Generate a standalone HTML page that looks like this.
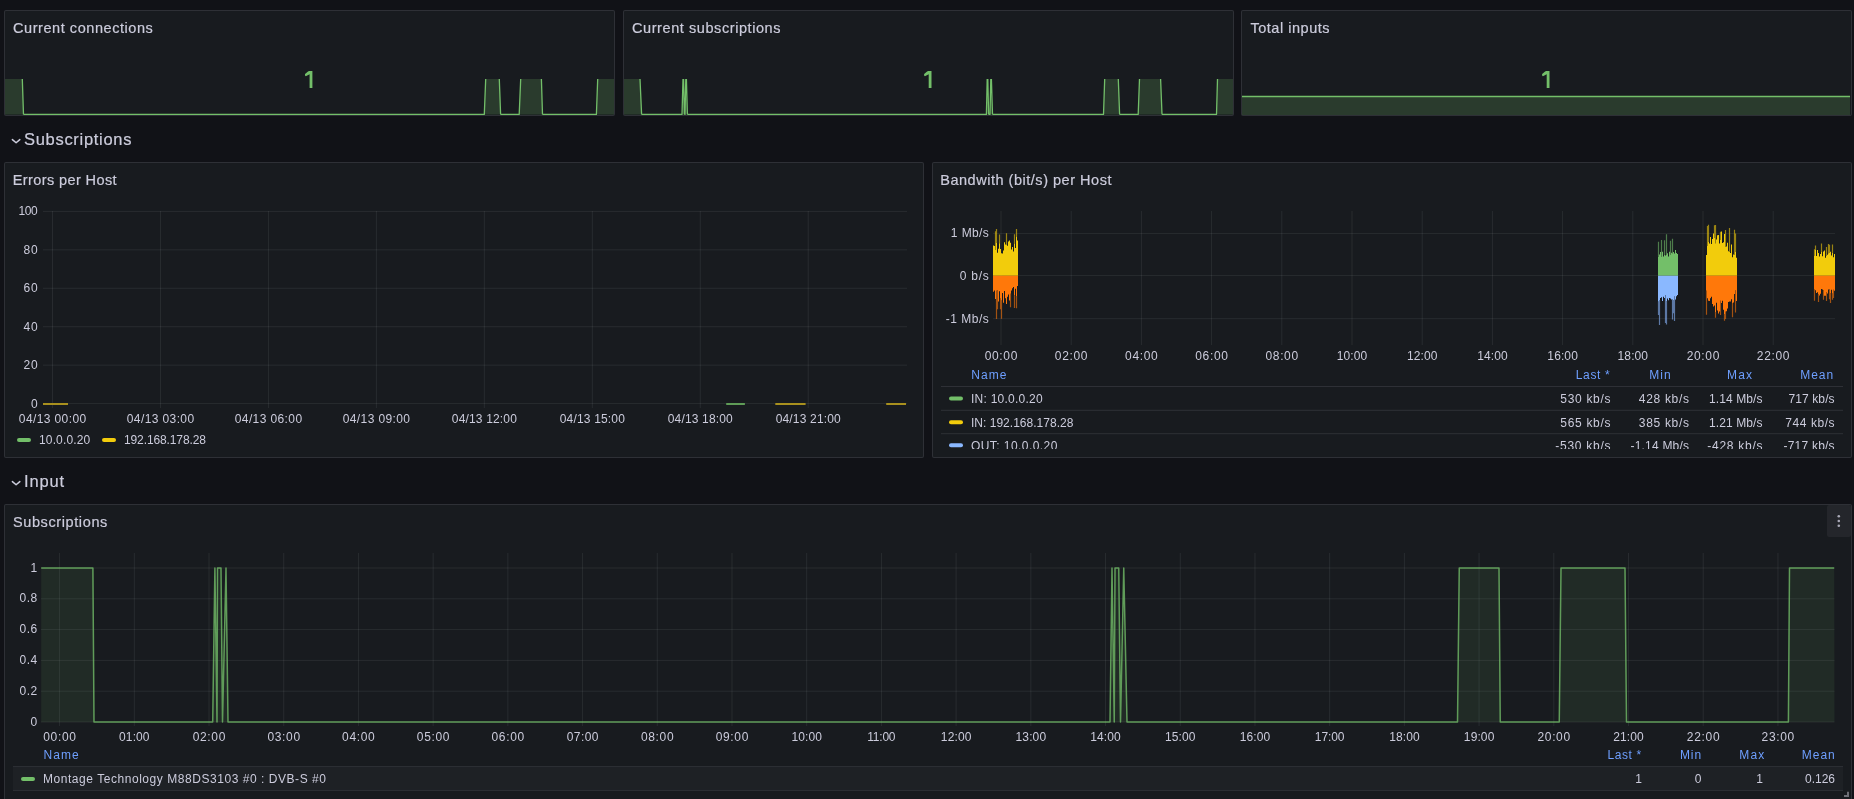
<!DOCTYPE html>
<html><head><meta charset="utf-8"><style>
html,body{margin:0;padding:0;background:#111217;}
body{width:1854px;height:799px;overflow:hidden;position:relative;font-family:"Liberation Sans",sans-serif;}
.p{position:absolute;box-sizing:border-box;background:#181b1f;border:1px solid rgba(204,204,220,0.12);border-radius:2px;}
svg{position:absolute;left:0;top:0;will-change:transform;}
svg text{font-family:"Liberation Sans",sans-serif;}
</style></head><body>
<div class="p" style="left:4px;top:10px;width:611px;height:106px"></div><div class="p" style="left:623px;top:10px;width:611px;height:106px"></div><div class="p" style="left:1241px;top:10px;width:611px;height:106px"></div><div class="p" style="left:4px;top:162px;width:920px;height:296px"></div><div class="p" style="left:932px;top:162px;width:920px;height:296px"></div><div class="p" style="left:4px;top:504px;width:1848px;height:320px"></div>
<svg width="1854" height="799" viewBox="0 0 1854 799">
<defs><clipPath id="bwclip"><rect x="933" y="380" width="917" height="69"/></clipPath></defs>
<path d="M5,114.4L5,79L22.3,79L23.5,114.4ZM484.3,114.4L485.7,79L499.3,79L500.6,114.4ZM519.2,114.4L520.7,79L541.4,79L542.5,114.4ZM596.4,114.4L597.7,79L614,79L614,114.4Z" fill="rgba(115,191,105,0.2)"/>
<path d="M22.3,79L23.5,114.4M23.5,114.4L484.3,114.4L485.7,79M499.3,79L500.6,114.4M500.6,114.4L519.2,114.4L520.7,79M541.4,79L542.5,114.4M542.5,114.4L596.4,114.4L597.7,79" fill="none" stroke="#73bf69" stroke-width="1.3" stroke-linejoin="round"/>
<path d="M624,114.4L624,79L640,79L641.6,114.4ZM682,114.4L683,79L683.6,79L684.4,114.4ZM685,114.4L685.8,79L686.4,79L687.4,114.4ZM986.4,114.4L987.2,79L987.8,79L988.6,114.4ZM990,114.4L990.8,79L991.4,79L992.5,114.4ZM1103.5,114.4L1104.7,79L1118.3,79L1119.6,114.4ZM1138.2,114.4L1139.5,79L1160.6,79L1162,114.4ZM1216.5,114.4L1217.5,79L1233,79L1233,114.4Z" fill="rgba(115,191,105,0.2)"/>
<path d="M640,79L641.6,114.4M641.6,114.4L682,114.4L683,79M683.6,79L684.4,114.4M684.4,114.4L685,114.4L685.8,79M686.4,79L687.4,114.4M687.4,114.4L986.4,114.4L987.2,79M987.8,79L988.6,114.4M988.6,114.4L990,114.4L990.8,79M991.4,79L992.5,114.4M992.5,114.4L1103.5,114.4L1104.7,79M1118.3,79L1119.6,114.4M1119.6,114.4L1138.2,114.4L1139.5,79M1160.6,79L1162,114.4M1162,114.4L1216.5,114.4L1217.5,79" fill="none" stroke="#73bf69" stroke-width="1.3" stroke-linejoin="round"/>
<rect x="1242" y="96.6" width="608" height="18.4" fill="rgba(115,191,105,0.2)"/>
<path d="M1242,96.6L1850,96.6" stroke="#73bf69" stroke-width="1.5"/>
<text x="13" y="33" font-size="14.5" text-anchor="start" fill="#ccccdc" textLength="139.8" lengthAdjust="spacing" font-weight="400" stroke="#ccccdc" stroke-width="0.2" >Current connections</text>
<text x="632" y="33" font-size="14.5" text-anchor="start" fill="#ccccdc" textLength="148.5" lengthAdjust="spacing" font-weight="400" stroke="#ccccdc" stroke-width="0.2" >Current subscriptions</text>
<text x="1250.5" y="33" font-size="14.5" text-anchor="start" fill="#ccccdc" textLength="79" lengthAdjust="spacing" font-weight="400" stroke="#ccccdc" stroke-width="0.2" >Total inputs</text>
<path d="M309.0,70.9L312.4,70.9L312.4,87.9L309.6,87.9L309.6,74.2L305.8,76.2L305.0,75.5L305.0,74.0L308.0,71.6Z" fill="#73bf69"/>
<path d="M928.1,70.9L931.5,70.9L931.5,87.9L928.7,87.9L928.7,74.2L924.9,76.2L924.1,75.5L924.1,74.0L927.1,71.6Z" fill="#73bf69"/>
<path d="M1546.1,70.9L1549.5,70.9L1549.5,87.9L1546.7,87.9L1546.7,74.2L1542.9,76.2L1542.1,75.5L1542.1,74.0L1545.1,71.6Z" fill="#73bf69"/>
<path d="M12.4,139.6L16.1,142.79999999999998L19.8,139.6" fill="none" stroke="#ccccdc" stroke-width="1.5" stroke-linecap="round" stroke-linejoin="round"/>
<text x="24" y="145" font-size="16.5" text-anchor="start" fill="#ccccdc" textLength="107.5" lengthAdjust="spacing" font-weight="400" stroke="#ccccdc" stroke-width="0.2" >Subscriptions</text>
<path d="M12.4,481.6L16.1,484.8L19.8,481.6" fill="none" stroke="#ccccdc" stroke-width="1.5" stroke-linecap="round" stroke-linejoin="round"/>
<text x="24" y="487.2" font-size="16.5" text-anchor="start" fill="#ccccdc" textLength="40.0" lengthAdjust="spacing" font-weight="400" stroke="#ccccdc" stroke-width="0.2" >Input</text>
<text x="12.8" y="185" font-size="14.5" text-anchor="start" fill="#ccccdc" textLength="103.8" lengthAdjust="spacing" font-weight="400" stroke="#ccccdc" stroke-width="0.2" >Errors per Host</text>
<path d="M43,211.40L907,211.40" stroke="rgba(240,250,255,0.075)" stroke-width="1"/>
<text x="37.8" y="215.4" font-size="12" text-anchor="end" fill="#ccccdc" textLength="19.4" lengthAdjust="spacing" font-weight="400"  >100</text>
<path d="M43,249.84L907,249.84" stroke="rgba(240,250,255,0.075)" stroke-width="1"/>
<text x="37.8" y="253.84" font-size="12" text-anchor="end" fill="#ccccdc" textLength="14.4" lengthAdjust="spacing" font-weight="400"  >80</text>
<path d="M43,288.28L907,288.28" stroke="rgba(240,250,255,0.075)" stroke-width="1"/>
<text x="37.8" y="292.28" font-size="12" text-anchor="end" fill="#ccccdc" textLength="14.4" lengthAdjust="spacing" font-weight="400"  >60</text>
<path d="M43,326.72L907,326.72" stroke="rgba(240,250,255,0.075)" stroke-width="1"/>
<text x="37.8" y="330.72" font-size="12" text-anchor="end" fill="#ccccdc" textLength="14.4" lengthAdjust="spacing" font-weight="400"  >40</text>
<path d="M43,365.16L907,365.16" stroke="rgba(240,250,255,0.075)" stroke-width="1"/>
<text x="37.8" y="369.15999999999997" font-size="12" text-anchor="end" fill="#ccccdc" textLength="14.4" lengthAdjust="spacing" font-weight="400"  >20</text>
<path d="M43,403.60L907,403.60" stroke="rgba(240,250,255,0.075)" stroke-width="1"/>
<text x="37.8" y="407.6" font-size="12" text-anchor="end" fill="#ccccdc" textLength="7.2" lengthAdjust="spacing" font-weight="400"  >0</text>
<path d="M52.50,211L52.50,408" stroke="rgba(240,250,255,0.075)" stroke-width="1"/>
<text x="52.5" y="423" font-size="12" text-anchor="middle" fill="#ccccdc" textLength="67.3" lengthAdjust="spacing" font-weight="400"  >04/13 00:00</text>
<path d="M160.46,211L160.46,408" stroke="rgba(240,250,255,0.075)" stroke-width="1"/>
<text x="160.45999999999998" y="423" font-size="12" text-anchor="middle" fill="#ccccdc" textLength="67.3" lengthAdjust="spacing" font-weight="400"  >04/13 03:00</text>
<path d="M268.42,211L268.42,408" stroke="rgba(240,250,255,0.075)" stroke-width="1"/>
<text x="268.41999999999996" y="423" font-size="12" text-anchor="middle" fill="#ccccdc" textLength="67.3" lengthAdjust="spacing" font-weight="400"  >04/13 06:00</text>
<path d="M376.38,211L376.38,408" stroke="rgba(240,250,255,0.075)" stroke-width="1"/>
<text x="376.38" y="423" font-size="12" text-anchor="middle" fill="#ccccdc" textLength="67.3" lengthAdjust="spacing" font-weight="400"  >04/13 09:00</text>
<path d="M484.34,211L484.34,408" stroke="rgba(240,250,255,0.075)" stroke-width="1"/>
<text x="484.34" y="423" font-size="12" text-anchor="middle" fill="#ccccdc" textLength="65.1" lengthAdjust="spacing" font-weight="400"  >04/13 12:00</text>
<path d="M592.30,211L592.30,408" stroke="rgba(240,250,255,0.075)" stroke-width="1"/>
<text x="592.3" y="423" font-size="12" text-anchor="middle" fill="#ccccdc" textLength="65.1" lengthAdjust="spacing" font-weight="400"  >04/13 15:00</text>
<path d="M700.26,211L700.26,408" stroke="rgba(240,250,255,0.075)" stroke-width="1"/>
<text x="700.26" y="423" font-size="12" text-anchor="middle" fill="#ccccdc" textLength="65.1" lengthAdjust="spacing" font-weight="400"  >04/13 18:00</text>
<path d="M808.22,211L808.22,408" stroke="rgba(240,250,255,0.075)" stroke-width="1"/>
<text x="808.2199999999999" y="423" font-size="12" text-anchor="middle" fill="#ccccdc" textLength="65.1" lengthAdjust="spacing" font-weight="400"  >04/13 21:00</text>
<path d="M43,404.0L68,404.0" stroke="#a8901e" stroke-width="2"/>
<path d="M726.2,404.0L744.9,404.0" stroke="#5f9c57" stroke-width="2"/>
<path d="M775.3,404.0L805.6,404.0" stroke="#a8901e" stroke-width="2"/>
<path d="M886.2,404.0L906,404.0" stroke="#a8901e" stroke-width="2"/>
<rect x="17" y="438.0" width="14" height="4" rx="2" fill="#73bf69"/>
<text x="39" y="444" font-size="12" text-anchor="start" fill="#ccccdc" textLength="51.2" lengthAdjust="spacing" font-weight="400"  >10.0.0.20</text>
<rect x="102" y="438.0" width="14" height="4" rx="2" fill="#f2cc0c"/>
<text x="124" y="444" font-size="12" text-anchor="start" fill="#ccccdc" textLength="81.9" lengthAdjust="spacing" font-weight="400"  >192.168.178.28</text>
<text x="940.2" y="185" font-size="14.5" text-anchor="start" fill="#ccccdc" textLength="171.3" lengthAdjust="spacing" font-weight="400" stroke="#ccccdc" stroke-width="0.2" >Bandwith (bit/s) per Host</text>
<path d="M993,233.60L1835,233.60" stroke="rgba(240,250,255,0.075)" stroke-width="1"/>
<text x="988.8" y="237.1" font-size="12" text-anchor="end" fill="#ccccdc" textLength="37.96" lengthAdjust="spacing" font-weight="400"  >1 Mb/s</text>
<path d="M993,275.60L1835,275.60" stroke="rgba(240,250,255,0.075)" stroke-width="1"/>
<text x="988.8" y="280.0" font-size="12" text-anchor="end" fill="#ccccdc" textLength="29.16" lengthAdjust="spacing" font-weight="400"  >0 b/s</text>
<path d="M993,318.70L1835,318.70" stroke="rgba(240,250,255,0.075)" stroke-width="1"/>
<text x="988.8" y="323.09999999999997" font-size="12" text-anchor="end" fill="#ccccdc" textLength="42.96" lengthAdjust="spacing" font-weight="400"  >-1 Mb/s</text>
<path d="M1001.00,211L1001.00,345" stroke="rgba(240,250,255,0.075)" stroke-width="1"/>
<text x="1001.0" y="360" font-size="12" text-anchor="middle" fill="#ccccdc" textLength="32.7" lengthAdjust="spacing" font-weight="400"  >00:00</text>
<path d="M1071.20,211L1071.20,345" stroke="rgba(240,250,255,0.075)" stroke-width="1"/>
<text x="1071.2" y="360" font-size="12" text-anchor="middle" fill="#ccccdc" textLength="32.7" lengthAdjust="spacing" font-weight="400"  >02:00</text>
<path d="M1141.40,211L1141.40,345" stroke="rgba(240,250,255,0.075)" stroke-width="1"/>
<text x="1141.4" y="360" font-size="12" text-anchor="middle" fill="#ccccdc" textLength="32.7" lengthAdjust="spacing" font-weight="400"  >04:00</text>
<path d="M1211.60,211L1211.60,345" stroke="rgba(240,250,255,0.075)" stroke-width="1"/>
<text x="1211.6" y="360" font-size="12" text-anchor="middle" fill="#ccccdc" textLength="32.7" lengthAdjust="spacing" font-weight="400"  >06:00</text>
<path d="M1281.80,211L1281.80,345" stroke="rgba(240,250,255,0.075)" stroke-width="1"/>
<text x="1281.8" y="360" font-size="12" text-anchor="middle" fill="#ccccdc" textLength="32.7" lengthAdjust="spacing" font-weight="400"  >08:00</text>
<path d="M1352.00,211L1352.00,345" stroke="rgba(240,250,255,0.075)" stroke-width="1"/>
<text x="1352.0" y="360" font-size="12" text-anchor="middle" fill="#ccccdc" textLength="30.5" lengthAdjust="spacing" font-weight="400"  >10:00</text>
<path d="M1422.20,211L1422.20,345" stroke="rgba(240,250,255,0.075)" stroke-width="1"/>
<text x="1422.2" y="360" font-size="12" text-anchor="middle" fill="#ccccdc" textLength="30.5" lengthAdjust="spacing" font-weight="400"  >12:00</text>
<path d="M1492.40,211L1492.40,345" stroke="rgba(240,250,255,0.075)" stroke-width="1"/>
<text x="1492.4" y="360" font-size="12" text-anchor="middle" fill="#ccccdc" textLength="30.5" lengthAdjust="spacing" font-weight="400"  >14:00</text>
<path d="M1562.60,211L1562.60,345" stroke="rgba(240,250,255,0.075)" stroke-width="1"/>
<text x="1562.6" y="360" font-size="12" text-anchor="middle" fill="#ccccdc" textLength="30.5" lengthAdjust="spacing" font-weight="400"  >16:00</text>
<path d="M1632.80,211L1632.80,345" stroke="rgba(240,250,255,0.075)" stroke-width="1"/>
<text x="1632.8000000000002" y="360" font-size="12" text-anchor="middle" fill="#ccccdc" textLength="30.5" lengthAdjust="spacing" font-weight="400"  >18:00</text>
<path d="M1703.00,211L1703.00,345" stroke="rgba(240,250,255,0.075)" stroke-width="1"/>
<text x="1703.0" y="360" font-size="12" text-anchor="middle" fill="#ccccdc" textLength="32.7" lengthAdjust="spacing" font-weight="400"  >20:00</text>
<path d="M1773.20,211L1773.20,345" stroke="rgba(240,250,255,0.075)" stroke-width="1"/>
<text x="1773.2" y="360" font-size="12" text-anchor="middle" fill="#ccccdc" textLength="32.7" lengthAdjust="spacing" font-weight="400"  >22:00</text>
<path d="M993,275.8L993,245.5L994,245.5L994,275.8ZM994,275.8L994,245.9L995,245.9L995,275.8ZM995,275.8L995,249.9L996,249.9L996,275.8ZM996,275.8L996,243.0L997,243.0L997,275.8ZM997,275.8L997,252.7L998,252.7L998,275.8ZM998,275.8L998,248.8L999,248.8L999,275.8ZM999,275.8L999,243.3L1000,243.3L1000,275.8ZM1000,275.8L1000,248.9L1001,248.9L1001,275.8ZM1001,275.8L1001,253.3L1002,253.3L1002,275.8ZM1002,275.8L1002,253.4L1003,253.4L1003,275.8ZM1003,275.8L1003,250.6L1004,250.6L1004,275.8ZM1004,275.8L1004,242.3L1005,242.3L1005,275.8ZM1005,275.8L1005,244.5L1006,244.5L1006,275.8ZM1006,275.8L1006,244.5L1007,244.5L1007,275.8ZM1007,275.8L1007,245.8L1008,245.8L1008,275.8ZM1008,275.8L1008,241.4L1009,241.4L1009,275.8ZM1009,275.8L1009,240.5L1010,240.5L1010,275.8ZM1010,275.8L1010,242.7L1011,242.7L1011,275.8ZM1011,275.8L1011,249.4L1012,249.4L1012,275.8ZM1012,275.8L1012,247.0L1013,247.0L1013,275.8ZM1013,275.8L1013,251.4L1014,251.4L1014,275.8ZM1014,275.8L1014,243.6L1015,243.6L1015,275.8ZM1015,275.8L1015,248.0L1016,248.0L1016,275.8ZM1016,275.8L1016,236.4L1017,236.4L1017,275.8ZM1017,275.8L1017,240.4L1018,240.4L1018,275.8Z" fill="#f2cc0c"/>
<path d="M993,275.8L993,291.7L994,291.7L994,275.8ZM994,275.8L994,290.4L995,290.4L995,275.8ZM995,275.8L995,299.0L996,299.0L996,275.8ZM996,275.8L996,290.8L997,290.8L997,275.8ZM997,275.8L997,289.9L998,289.9L998,275.8ZM998,275.8L998,301.5L999,301.5L999,275.8ZM999,275.8L999,291.2L1000,291.2L1000,275.8ZM1000,275.8L1000,298.6L1001,298.6L1001,275.8ZM1001,275.8L1001,300.5L1002,300.5L1002,275.8ZM1002,275.8L1002,292.9L1003,292.9L1003,275.8ZM1003,275.8L1003,302.7L1004,302.7L1004,275.8ZM1004,275.8L1004,290.9L1005,290.9L1005,275.8ZM1005,275.8L1005,298.2L1006,298.2L1006,275.8ZM1006,275.8L1006,304.1L1007,304.1L1007,275.8ZM1007,275.8L1007,296.7L1008,296.7L1008,275.8ZM1008,275.8L1008,294.5L1009,294.5L1009,275.8ZM1009,275.8L1009,300.6L1010,300.6L1010,275.8ZM1010,275.8L1010,293.7L1011,293.7L1011,275.8ZM1011,275.8L1011,290.6L1012,290.6L1012,275.8ZM1012,275.8L1012,288.3L1013,288.3L1013,275.8ZM1013,275.8L1013,286.9L1014,286.9L1014,275.8ZM1014,275.8L1014,295.2L1015,295.2L1015,275.8ZM1015,275.8L1015,288.8L1016,288.8L1016,275.8ZM1016,275.8L1016,296.1L1017,296.1L1017,275.8ZM1017,275.8L1017,286.0L1018,286.0L1018,275.8Z" fill="#ff780a"/>
<path d="M995.5,249.9L995.5,231.3M996.5,243.0L996.5,228.9M999.5,243.3L999.5,234.6M1006.5,244.5L1006.5,233.3M1014.5,243.6L1014.5,234.3M1016.5,236.4L1016.5,229.0" stroke="#f2cc0c" stroke-width="1.2" opacity="0.6"/>
<path d="M996.5,290.8L996.5,319.0M997.5,289.9L997.5,309.2M1000.5,298.6L1000.5,309.2M1001.5,300.5L1001.5,318.7M1010.5,293.7L1010.5,307.2M1014.5,295.2L1014.5,307.9M1016.5,296.1L1016.5,308.3" stroke="#ff780a" stroke-width="1.2" opacity="0.6"/>
<path d="M1658,275.8L1658,256.7L1659,256.7L1659,275.8ZM1659,275.8L1659,254.4L1660,254.4L1660,275.8ZM1660,275.8L1660,251.9L1661,251.9L1661,275.8ZM1661,275.8L1661,256.4L1662,256.4L1662,275.8ZM1662,275.8L1662,251.8L1663,251.8L1663,275.8ZM1663,275.8L1663,256.5L1664,256.5L1664,275.8ZM1664,275.8L1664,254.7L1665,254.7L1665,275.8ZM1665,275.8L1665,255.4L1666,255.4L1666,275.8ZM1666,275.8L1666,254.5L1667,254.5L1667,275.8ZM1667,275.8L1667,253.3L1668,253.3L1668,275.8ZM1668,275.8L1668,256.4L1669,256.4L1669,275.8ZM1669,275.8L1669,251.7L1670,251.7L1670,275.8ZM1670,275.8L1670,254.5L1671,254.5L1671,275.8ZM1671,275.8L1671,252.7L1672,252.7L1672,275.8ZM1672,275.8L1672,253.3L1673,253.3L1673,275.8ZM1673,275.8L1673,252.1L1674,252.1L1674,275.8ZM1674,275.8L1674,253.5L1675,253.5L1675,275.8ZM1675,275.8L1675,249.9L1676,249.9L1676,275.8ZM1676,275.8L1676,253.0L1677,253.0L1677,275.8ZM1677,275.8L1677,253.9L1678,253.9L1678,275.8Z" fill="#73bf69"/>
<path d="M1658,275.8L1658,301.4L1659,301.4L1659,275.8ZM1659,275.8L1659,299.9L1660,299.9L1660,275.8ZM1660,275.8L1660,298.0L1661,298.0L1661,275.8ZM1661,275.8L1661,297.2L1662,297.2L1662,275.8ZM1662,275.8L1662,301.1L1663,301.1L1663,275.8ZM1663,275.8L1663,296.7L1664,296.7L1664,275.8ZM1664,275.8L1664,297.9L1665,297.9L1665,275.8ZM1665,275.8L1665,295.3L1666,295.3L1666,275.8ZM1666,275.8L1666,301.1L1667,301.1L1667,275.8ZM1667,275.8L1667,298.6L1668,298.6L1668,275.8ZM1668,275.8L1668,300.2L1669,300.2L1669,275.8ZM1669,275.8L1669,298.0L1670,298.0L1670,275.8ZM1670,275.8L1670,298.5L1671,298.5L1671,275.8ZM1671,275.8L1671,299.5L1672,299.5L1672,275.8ZM1672,275.8L1672,299.5L1673,299.5L1673,275.8ZM1673,275.8L1673,300.0L1674,300.0L1674,275.8ZM1674,275.8L1674,296.5L1675,296.5L1675,275.8ZM1675,275.8L1675,299.4L1676,299.4L1676,275.8ZM1676,275.8L1676,296.2L1677,296.2L1677,275.8ZM1677,275.8L1677,295.1L1678,295.1L1678,275.8Z" fill="#8ab8ff"/>
<path d="M1658.5,256.7L1658.5,241.8M1661.5,256.4L1661.5,240.0M1664.5,254.7L1664.5,240.3M1666.5,254.5L1666.5,234.3M1670.5,254.5L1670.5,240.7M1672.5,253.3L1672.5,238.8" stroke="#73bf69" stroke-width="1.2" opacity="0.6"/>
<path d="M1658.5,301.4L1658.5,314.9M1659.5,299.9L1659.5,325.0M1665.5,295.3L1665.5,322.9M1666.5,301.1L1666.5,324.6M1672.5,299.5L1672.5,319.6M1673.5,300.0L1673.5,313.2M1674.5,296.5L1674.5,321.1" stroke="#8ab8ff" stroke-width="1.2" opacity="0.6"/>
<path d="M1706,275.8L1706,254.9L1707,254.9L1707,275.8ZM1707,275.8L1707,246.1L1708,246.1L1708,275.8ZM1708,275.8L1708,241.8L1709,241.8L1709,275.8ZM1709,275.8L1709,243.6L1710,243.6L1710,275.8ZM1710,275.8L1710,236.9L1711,236.9L1711,275.8ZM1711,275.8L1711,244.1L1712,244.1L1712,275.8ZM1712,275.8L1712,239.0L1713,239.0L1713,275.8ZM1713,275.8L1713,233.5L1714,233.5L1714,275.8ZM1714,275.8L1714,237.7L1715,237.7L1715,275.8ZM1715,275.8L1715,243.2L1716,243.2L1716,275.8ZM1716,275.8L1716,239.6L1717,239.6L1717,275.8ZM1717,275.8L1717,235.3L1718,235.3L1718,275.8ZM1718,275.8L1718,234.9L1719,234.9L1719,275.8ZM1719,275.8L1719,243.4L1720,243.4L1720,275.8ZM1720,275.8L1720,239.9L1721,239.9L1721,275.8ZM1721,275.8L1721,231.4L1722,231.4L1722,275.8ZM1722,275.8L1722,243.1L1723,243.1L1723,275.8ZM1723,275.8L1723,242.2L1724,242.2L1724,275.8ZM1724,275.8L1724,233.9L1725,233.9L1725,275.8ZM1725,275.8L1725,247.0L1726,247.0L1726,275.8ZM1726,275.8L1726,246.6L1727,246.6L1727,275.8ZM1727,275.8L1727,242.8L1728,242.8L1728,275.8ZM1728,275.8L1728,251.3L1729,251.3L1729,275.8ZM1729,275.8L1729,252.0L1730,252.0L1730,275.8ZM1730,275.8L1730,252.9L1731,252.9L1731,275.8ZM1731,275.8L1731,244.6L1732,244.6L1732,275.8ZM1732,275.8L1732,257.2L1733,257.2L1733,275.8ZM1733,275.8L1733,254.5L1734,254.5L1734,275.8ZM1734,275.8L1734,254.7L1735,254.7L1735,275.8ZM1735,275.8L1735,251.8L1736,251.8L1736,275.8ZM1736,275.8L1736,257.7L1737,257.7L1737,275.8Z" fill="#f2cc0c"/>
<path d="M1706,275.8L1706,290.8L1707,290.8L1707,275.8ZM1707,275.8L1707,298.3L1708,298.3L1708,275.8ZM1708,275.8L1708,300.7L1709,300.7L1709,275.8ZM1709,275.8L1709,301.1L1710,301.1L1710,275.8ZM1710,275.8L1710,298.3L1711,298.3L1711,275.8ZM1711,275.8L1711,296.7L1712,296.7L1712,275.8ZM1712,275.8L1712,303.9L1713,303.9L1713,275.8ZM1713,275.8L1713,306.6L1714,306.6L1714,275.8ZM1714,275.8L1714,305.4L1715,305.4L1715,275.8ZM1715,275.8L1715,312.1L1716,312.1L1716,275.8ZM1716,275.8L1716,302.7L1717,302.7L1717,275.8ZM1717,275.8L1717,310.4L1718,310.4L1718,275.8ZM1718,275.8L1718,313.4L1719,313.4L1719,275.8ZM1719,275.8L1719,311.4L1720,311.4L1720,275.8ZM1720,275.8L1720,300.8L1721,300.8L1721,275.8ZM1721,275.8L1721,302.9L1722,302.9L1722,275.8ZM1722,275.8L1722,300.8L1723,300.8L1723,275.8ZM1723,275.8L1723,309.8L1724,309.8L1724,275.8ZM1724,275.8L1724,313.9L1725,313.9L1725,275.8ZM1725,275.8L1725,311.8L1726,311.8L1726,275.8ZM1726,275.8L1726,311.2L1727,311.2L1727,275.8ZM1727,275.8L1727,308.6L1728,308.6L1728,275.8ZM1728,275.8L1728,302.1L1729,302.1L1729,275.8ZM1729,275.8L1729,301.6L1730,301.6L1730,275.8ZM1730,275.8L1730,301.6L1731,301.6L1731,275.8ZM1731,275.8L1731,299.2L1732,299.2L1732,275.8ZM1732,275.8L1732,303.6L1733,303.6L1733,275.8ZM1733,275.8L1733,302.6L1734,302.6L1734,275.8ZM1734,275.8L1734,294.0L1735,294.0L1735,275.8ZM1735,275.8L1735,290.5L1736,290.5L1736,275.8ZM1736,275.8L1736,301.0L1737,301.0L1737,275.8Z" fill="#ff780a"/>
<path d="M1707.5,246.1L1707.5,226.1M1708.5,241.8L1708.5,224.8M1714.5,237.7L1714.5,225.2M1715.5,243.2L1715.5,224.9M1720.5,239.9L1720.5,231.7M1725.5,247.0L1725.5,230.1M1729.5,252.0L1729.5,228.1M1734.5,254.7L1734.5,229.8M1735.5,251.8L1735.5,233.5" stroke="#f2cc0c" stroke-width="1.2" opacity="0.6"/>
<path d="M1706.5,290.8L1706.5,314.8M1715.5,312.1L1715.5,317.8M1720.5,300.8L1720.5,315.1M1724.5,313.9L1724.5,320.8M1725.5,311.8L1725.5,318.9M1732.5,303.6L1732.5,317.2M1735.5,290.5L1735.5,312.6" stroke="#ff780a" stroke-width="1.2" opacity="0.6"/>
<path d="M1814,275.8L1814,255.4L1815,255.4L1815,275.8ZM1815,275.8L1815,249.8L1816,249.8L1816,275.8ZM1816,275.8L1816,255.9L1817,255.9L1817,275.8ZM1817,275.8L1817,250.0L1818,250.0L1818,275.8ZM1818,275.8L1818,253.0L1819,253.0L1819,275.8ZM1819,275.8L1819,256.6L1820,256.6L1820,275.8ZM1820,275.8L1820,253.9L1821,253.9L1821,275.8ZM1821,275.8L1821,251.8L1822,251.8L1822,275.8ZM1822,275.8L1822,256.2L1823,256.2L1823,275.8ZM1823,275.8L1823,251.4L1824,251.4L1824,275.8ZM1824,275.8L1824,250.4L1825,250.4L1825,275.8ZM1825,275.8L1825,257.8L1826,257.8L1826,275.8ZM1826,275.8L1826,255.9L1827,255.9L1827,275.8ZM1827,275.8L1827,254.8L1828,254.8L1828,275.8ZM1828,275.8L1828,253.2L1829,253.2L1829,275.8ZM1829,275.8L1829,252.9L1830,252.9L1830,275.8ZM1830,275.8L1830,251.8L1831,251.8L1831,275.8ZM1831,275.8L1831,255.4L1832,255.4L1832,275.8ZM1832,275.8L1832,252.7L1833,252.7L1833,275.8ZM1833,275.8L1833,257.2L1834,257.2L1834,275.8ZM1834,275.8L1834,253.9L1835,253.9L1835,275.8Z" fill="#f2cc0c"/>
<path d="M1814,275.8L1814,289.4L1815,289.4L1815,275.8ZM1815,275.8L1815,290.2L1816,290.2L1816,275.8ZM1816,275.8L1816,293.0L1817,293.0L1817,275.8ZM1817,275.8L1817,292.3L1818,292.3L1818,275.8ZM1818,275.8L1818,294.3L1819,294.3L1819,275.8ZM1819,275.8L1819,295.6L1820,295.6L1820,275.8ZM1820,275.8L1820,293.7L1821,293.7L1821,275.8ZM1821,275.8L1821,288.9L1822,288.9L1822,275.8ZM1822,275.8L1822,289.6L1823,289.6L1823,275.8ZM1823,275.8L1823,290.3L1824,290.3L1824,275.8ZM1824,275.8L1824,295.7L1825,295.7L1825,275.8ZM1825,275.8L1825,295.8L1826,295.8L1826,275.8ZM1826,275.8L1826,292.2L1827,292.2L1827,275.8ZM1827,275.8L1827,293.5L1828,293.5L1828,275.8ZM1828,275.8L1828,289.5L1829,289.5L1829,275.8ZM1829,275.8L1829,289.1L1830,289.1L1830,275.8ZM1830,275.8L1830,293.0L1831,293.0L1831,275.8ZM1831,275.8L1831,289.7L1832,289.7L1832,275.8ZM1832,275.8L1832,293.4L1833,293.4L1833,275.8ZM1833,275.8L1833,289.8L1834,289.8L1834,275.8ZM1834,275.8L1834,290.8L1835,290.8L1835,275.8Z" fill="#ff780a"/>
<path d="M1814.5,255.4L1814.5,249.2M1815.5,249.8L1815.5,245.4M1821.5,251.8L1821.5,243.4M1826.5,255.9L1826.5,247.1M1828.5,253.2L1828.5,243.9M1829.5,252.9L1829.5,244.8M1832.5,252.7L1832.5,244.5" stroke="#f2cc0c" stroke-width="1.2" opacity="0.6"/>
<path d="M1814.5,289.4L1814.5,300.8M1818.5,294.3L1818.5,302.0M1823.5,290.3L1823.5,299.8M1826.5,292.2L1826.5,301.1M1829.5,289.1L1829.5,299.2M1830.5,293.0L1830.5,302.9M1832.5,293.4L1832.5,299.8M1833.5,289.8L1833.5,298.1" stroke="#ff780a" stroke-width="1.2" opacity="0.6"/>
<text x="971.3" y="378.8" font-size="12" text-anchor="start" fill="#6e9fff" textLength="35.25" lengthAdjust="spacing" font-weight="400"  >Name</text>
<text x="1609.6" y="378.8" font-size="12" text-anchor="end" fill="#6e9fff" textLength="33.79" lengthAdjust="spacing" font-weight="400"  >Last *</text>
<text x="1670.6" y="378.8" font-size="12" text-anchor="end" fill="#6e9fff" textLength="21.3" lengthAdjust="spacing" font-weight="400"  >Min</text>
<text x="1752" y="378.8" font-size="12" text-anchor="end" fill="#6e9fff" textLength="24.96" lengthAdjust="spacing" font-weight="400"  >Max</text>
<text x="1833.2" y="378.8" font-size="12" text-anchor="end" fill="#6e9fff" textLength="33.07" lengthAdjust="spacing" font-weight="400"  >Mean</text>
<g clip-path="url(#bwclip)">
<path d="M941,386.5L1843,386.5" stroke="rgba(204,204,220,0.12)" stroke-width="1"/>
<path d="M941,410.3L1843,410.3" stroke="rgba(204,204,220,0.12)" stroke-width="1"/>
<path d="M941,433.7L1843,433.7" stroke="rgba(204,204,220,0.12)" stroke-width="1"/>
<rect x="949" y="396.5" width="14" height="4" rx="2" fill="#73bf69"/>
<text x="971" y="403" font-size="12" text-anchor="start" fill="#ccccdc" textLength="71.72" lengthAdjust="spacing" font-weight="400"  >IN: 10.0.0.20</text>
<text x="1610.5" y="403" font-size="12" text-anchor="end" fill="#ccccdc" textLength="50.16" lengthAdjust="spacing" font-weight="400"  >530 kb/s</text>
<text x="1689" y="403" font-size="12" text-anchor="end" fill="#ccccdc" textLength="50.16" lengthAdjust="spacing" font-weight="400"  >428 kb/s</text>
<text x="1762.5" y="403" font-size="12" text-anchor="end" fill="#ccccdc" textLength="53.56" lengthAdjust="spacing" font-weight="400"  >1.14 Mb/s</text>
<text x="1834.6" y="403" font-size="12" text-anchor="end" fill="#ccccdc" textLength="46.16" lengthAdjust="spacing" font-weight="400"  >717 kb/s</text>
<rect x="949" y="420.3" width="14" height="4" rx="2" fill="#f2cc0c"/>
<text x="971" y="426.8" font-size="12" text-anchor="start" fill="#ccccdc" textLength="102.42" lengthAdjust="spacing" font-weight="400"  >IN: 192.168.178.28</text>
<text x="1610.5" y="426.8" font-size="12" text-anchor="end" fill="#ccccdc" textLength="50.16" lengthAdjust="spacing" font-weight="400"  >565 kb/s</text>
<text x="1689" y="426.8" font-size="12" text-anchor="end" fill="#ccccdc" textLength="50.16" lengthAdjust="spacing" font-weight="400"  >385 kb/s</text>
<text x="1762.5" y="426.8" font-size="12" text-anchor="end" fill="#ccccdc" textLength="53.56" lengthAdjust="spacing" font-weight="400"  >1.21 Mb/s</text>
<text x="1834.6" y="426.8" font-size="12" text-anchor="end" fill="#ccccdc" textLength="49.26" lengthAdjust="spacing" font-weight="400"  >744 kb/s</text>
<rect x="949" y="443.2" width="14" height="4" rx="2" fill="#8ab8ff"/>
<text x="971" y="449.7" font-size="12" text-anchor="start" fill="#ccccdc" textLength="86.4" lengthAdjust="spacing" font-weight="400"  >OUT: 10.0.0.20</text>
<text x="1610.5" y="449.7" font-size="12" text-anchor="end" fill="#ccccdc" textLength="55.16" lengthAdjust="spacing" font-weight="400"  >-530 kb/s</text>
<text x="1689" y="449.7" font-size="12" text-anchor="end" fill="#ccccdc" textLength="58.56" lengthAdjust="spacing" font-weight="400"  >-1.14 Mb/s</text>
<text x="1762.5" y="449.7" font-size="12" text-anchor="end" fill="#ccccdc" textLength="55.16" lengthAdjust="spacing" font-weight="400"  >-428 kb/s</text>
<text x="1834.6" y="449.7" font-size="12" text-anchor="end" fill="#ccccdc" textLength="51.16" lengthAdjust="spacing" font-weight="400"  >-717 kb/s</text>
</g>
<text x="13.0" y="527.1" font-size="14.5" text-anchor="start" fill="#ccccdc" textLength="94.3" lengthAdjust="spacing" font-weight="400" stroke="#ccccdc" stroke-width="0.2" >Subscriptions</text>
<rect x="1827" y="505" width="24" height="32" rx="2" fill="#24262b"/>
<circle cx="1838.8" cy="516.3" r="1.3" fill="rgba(204,204,220,0.8)"/>
<circle cx="1838.8" cy="521" r="1.3" fill="rgba(204,204,220,0.8)"/>
<circle cx="1838.8" cy="525.7" r="1.3" fill="rgba(204,204,220,0.8)"/>
<path d="M41,568.00L1834.5,568.00" stroke="rgba(240,250,255,0.075)" stroke-width="1"/>
<text x="37.3" y="571.5" font-size="12" text-anchor="end" fill="#ccccdc" textLength="5.0" lengthAdjust="spacing" font-weight="400"  >1</text>
<path d="M41,598.80L1834.5,598.80" stroke="rgba(240,250,255,0.075)" stroke-width="1"/>
<text x="37.3" y="602.3" font-size="12" text-anchor="end" fill="#ccccdc" textLength="17.8" lengthAdjust="spacing" font-weight="400"  >0.8</text>
<path d="M41,629.60L1834.5,629.60" stroke="rgba(240,250,255,0.075)" stroke-width="1"/>
<text x="37.3" y="633.1" font-size="12" text-anchor="end" fill="#ccccdc" textLength="17.8" lengthAdjust="spacing" font-weight="400"  >0.6</text>
<path d="M41,660.40L1834.5,660.40" stroke="rgba(240,250,255,0.075)" stroke-width="1"/>
<text x="37.3" y="663.9" font-size="12" text-anchor="end" fill="#ccccdc" textLength="17.8" lengthAdjust="spacing" font-weight="400"  >0.4</text>
<path d="M41,691.20L1834.5,691.20" stroke="rgba(240,250,255,0.075)" stroke-width="1"/>
<text x="37.3" y="694.7" font-size="12" text-anchor="end" fill="#ccccdc" textLength="17.8" lengthAdjust="spacing" font-weight="400"  >0.2</text>
<path d="M41,722.00L1834.5,722.00" stroke="rgba(240,250,255,0.075)" stroke-width="1"/>
<text x="37.3" y="725.5" font-size="12" text-anchor="end" fill="#ccccdc" textLength="7.2" lengthAdjust="spacing" font-weight="400"  >0</text>
<path d="M59.60,553L59.60,726" stroke="rgba(240,250,255,0.075)" stroke-width="1"/>
<text x="59.6" y="741" font-size="12" text-anchor="middle" fill="#ccccdc" textLength="32.7" lengthAdjust="spacing" font-weight="400"  >00:00</text>
<path d="M134.31,553L134.31,726" stroke="rgba(240,250,255,0.075)" stroke-width="1"/>
<text x="134.31" y="741" font-size="12" text-anchor="middle" fill="#ccccdc" textLength="30.5" lengthAdjust="spacing" font-weight="400"  >01:00</text>
<path d="M209.02,553L209.02,726" stroke="rgba(240,250,255,0.075)" stroke-width="1"/>
<text x="209.01999999999998" y="741" font-size="12" text-anchor="middle" fill="#ccccdc" textLength="32.7" lengthAdjust="spacing" font-weight="400"  >02:00</text>
<path d="M283.73,553L283.73,726" stroke="rgba(240,250,255,0.075)" stroke-width="1"/>
<text x="283.73" y="741" font-size="12" text-anchor="middle" fill="#ccccdc" textLength="32.7" lengthAdjust="spacing" font-weight="400"  >03:00</text>
<path d="M358.44,553L358.44,726" stroke="rgba(240,250,255,0.075)" stroke-width="1"/>
<text x="358.44" y="741" font-size="12" text-anchor="middle" fill="#ccccdc" textLength="32.7" lengthAdjust="spacing" font-weight="400"  >04:00</text>
<path d="M433.15,553L433.15,726" stroke="rgba(240,250,255,0.075)" stroke-width="1"/>
<text x="433.15" y="741" font-size="12" text-anchor="middle" fill="#ccccdc" textLength="32.7" lengthAdjust="spacing" font-weight="400"  >05:00</text>
<path d="M507.86,553L507.86,726" stroke="rgba(240,250,255,0.075)" stroke-width="1"/>
<text x="507.86" y="741" font-size="12" text-anchor="middle" fill="#ccccdc" textLength="32.7" lengthAdjust="spacing" font-weight="400"  >06:00</text>
<path d="M582.57,553L582.57,726" stroke="rgba(240,250,255,0.075)" stroke-width="1"/>
<text x="582.5699999999999" y="741" font-size="12" text-anchor="middle" fill="#ccccdc" textLength="31.8" lengthAdjust="spacing" font-weight="400"  >07:00</text>
<path d="M657.28,553L657.28,726" stroke="rgba(240,250,255,0.075)" stroke-width="1"/>
<text x="657.28" y="741" font-size="12" text-anchor="middle" fill="#ccccdc" textLength="32.7" lengthAdjust="spacing" font-weight="400"  >08:00</text>
<path d="M731.99,553L731.99,726" stroke="rgba(240,250,255,0.075)" stroke-width="1"/>
<text x="731.99" y="741" font-size="12" text-anchor="middle" fill="#ccccdc" textLength="32.7" lengthAdjust="spacing" font-weight="400"  >09:00</text>
<path d="M806.70,553L806.70,726" stroke="rgba(240,250,255,0.075)" stroke-width="1"/>
<text x="806.6999999999999" y="741" font-size="12" text-anchor="middle" fill="#ccccdc" textLength="30.5" lengthAdjust="spacing" font-weight="400"  >10:00</text>
<path d="M881.41,553L881.41,726" stroke="rgba(240,250,255,0.075)" stroke-width="1"/>
<text x="881.41" y="741" font-size="12" text-anchor="middle" fill="#ccccdc" textLength="28.3" lengthAdjust="spacing" font-weight="400"  >11:00</text>
<path d="M956.12,553L956.12,726" stroke="rgba(240,250,255,0.075)" stroke-width="1"/>
<text x="956.12" y="741" font-size="12" text-anchor="middle" fill="#ccccdc" textLength="30.5" lengthAdjust="spacing" font-weight="400"  >12:00</text>
<path d="M1030.83,553L1030.83,726" stroke="rgba(240,250,255,0.075)" stroke-width="1"/>
<text x="1030.83" y="741" font-size="12" text-anchor="middle" fill="#ccccdc" textLength="30.5" lengthAdjust="spacing" font-weight="400"  >13:00</text>
<path d="M1105.54,553L1105.54,726" stroke="rgba(240,250,255,0.075)" stroke-width="1"/>
<text x="1105.5399999999997" y="741" font-size="12" text-anchor="middle" fill="#ccccdc" textLength="30.5" lengthAdjust="spacing" font-weight="400"  >14:00</text>
<path d="M1180.25,553L1180.25,726" stroke="rgba(240,250,255,0.075)" stroke-width="1"/>
<text x="1180.2499999999998" y="741" font-size="12" text-anchor="middle" fill="#ccccdc" textLength="30.5" lengthAdjust="spacing" font-weight="400"  >15:00</text>
<path d="M1254.96,553L1254.96,726" stroke="rgba(240,250,255,0.075)" stroke-width="1"/>
<text x="1254.9599999999998" y="741" font-size="12" text-anchor="middle" fill="#ccccdc" textLength="30.5" lengthAdjust="spacing" font-weight="400"  >16:00</text>
<path d="M1329.67,553L1329.67,726" stroke="rgba(240,250,255,0.075)" stroke-width="1"/>
<text x="1329.6699999999998" y="741" font-size="12" text-anchor="middle" fill="#ccccdc" textLength="29.6" lengthAdjust="spacing" font-weight="400"  >17:00</text>
<path d="M1404.38,553L1404.38,726" stroke="rgba(240,250,255,0.075)" stroke-width="1"/>
<text x="1404.3799999999999" y="741" font-size="12" text-anchor="middle" fill="#ccccdc" textLength="30.5" lengthAdjust="spacing" font-weight="400"  >18:00</text>
<path d="M1479.09,553L1479.09,726" stroke="rgba(240,250,255,0.075)" stroke-width="1"/>
<text x="1479.0899999999997" y="741" font-size="12" text-anchor="middle" fill="#ccccdc" textLength="30.5" lengthAdjust="spacing" font-weight="400"  >19:00</text>
<path d="M1553.80,553L1553.80,726" stroke="rgba(240,250,255,0.075)" stroke-width="1"/>
<text x="1553.7999999999997" y="741" font-size="12" text-anchor="middle" fill="#ccccdc" textLength="32.7" lengthAdjust="spacing" font-weight="400"  >20:00</text>
<path d="M1628.51,553L1628.51,726" stroke="rgba(240,250,255,0.075)" stroke-width="1"/>
<text x="1628.5099999999998" y="741" font-size="12" text-anchor="middle" fill="#ccccdc" textLength="30.5" lengthAdjust="spacing" font-weight="400"  >21:00</text>
<path d="M1703.22,553L1703.22,726" stroke="rgba(240,250,255,0.075)" stroke-width="1"/>
<text x="1703.2199999999998" y="741" font-size="12" text-anchor="middle" fill="#ccccdc" textLength="32.7" lengthAdjust="spacing" font-weight="400"  >22:00</text>
<path d="M1777.93,553L1777.93,726" stroke="rgba(240,250,255,0.075)" stroke-width="1"/>
<text x="1777.9299999999998" y="741" font-size="12" text-anchor="middle" fill="#ccccdc" textLength="32.7" lengthAdjust="spacing" font-weight="400"  >23:00</text>
<path d="M41.2,568.0L92.9,568.0L94,722.0L212.7,722.0L214.9,568.0L217,722.0L217.5,568.0L221,568.0L222.5,722.0L226,568.0L228,722.0L1110,722.0L1112,568.0L1114.25,722.0L1115,568.0L1118.75,568.0L1120.5,722.0L1123.75,568.0L1127,722.0L1457.5,722.0L1459.25,568.0L1499,568.0L1500.25,722.0L1559.25,722.0L1561,568.0L1625,568.0L1626.5,722.0L1788.4,722.0L1789.5,568.0L1834.2,568.0L1834.5,722.0L41.2,722.0Z" fill="rgba(115,191,105,0.1)"/>
<path d="M41.2,568.0L92.9,568.0L94,722.0L212.7,722.0L214.9,568.0L217,722.0L217.5,568.0L221,568.0L222.5,722.0L226,568.0L228,722.0L1110,722.0L1112,568.0L1114.25,722.0L1115,568.0L1118.75,568.0L1120.5,722.0L1123.75,568.0L1127,722.0L1457.5,722.0L1459.25,568.0L1499,568.0L1500.25,722.0L1559.25,722.0L1561,568.0L1625,568.0L1626.5,722.0L1788.4,722.0L1789.5,568.0L1834.2,568.0" fill="none" stroke="#73bf69" stroke-opacity="0.78" stroke-width="1.5" stroke-linejoin="round"/>
<text x="43.4" y="759.2" font-size="12" text-anchor="start" fill="#6e9fff" textLength="35.25" lengthAdjust="spacing" font-weight="400"  >Name</text>
<text x="1641.2" y="759.2" font-size="12" text-anchor="end" fill="#6e9fff" textLength="33.79" lengthAdjust="spacing" font-weight="400"  >Last *</text>
<text x="1701.2" y="759.2" font-size="12" text-anchor="end" fill="#6e9fff" textLength="21.3" lengthAdjust="spacing" font-weight="400"  >Min</text>
<text x="1764.2" y="759.2" font-size="12" text-anchor="end" fill="#6e9fff" textLength="24.96" lengthAdjust="spacing" font-weight="400"  >Max</text>
<text x="1834.8" y="759.2" font-size="12" text-anchor="end" fill="#6e9fff" textLength="33.07" lengthAdjust="spacing" font-weight="400"  >Mean</text>
<path d="M13,766.6L1843,766.6" stroke="rgba(204,204,220,0.12)" stroke-width="1"/>
<path d="M13,790.4L1843,790.4" stroke="rgba(204,204,220,0.12)" stroke-width="1"/>
<rect x="13" y="767" width="1830" height="23" fill="rgba(204,204,220,0.035)"/>
<rect x="21" y="776.9" width="14" height="4" rx="2" fill="#73bf69"/>
<text x="43" y="783.3" font-size="12" text-anchor="start" fill="#ccccdc" textLength="283" lengthAdjust="spacing" font-weight="400"  >Montage Technology M88DS3103 #0 : DVB-S #0</text>
<text x="1642" y="783.3" font-size="12" text-anchor="end" fill="#ccccdc" textLength="5.0" lengthAdjust="spacing" font-weight="400"  >1</text>
<text x="1701.5" y="783.3" font-size="12" text-anchor="end" fill="#ccccdc" textLength="7.2" lengthAdjust="spacing" font-weight="400"  >0</text>
<text x="1763" y="783.3" font-size="12" text-anchor="end" fill="#ccccdc" textLength="5.0" lengthAdjust="spacing" font-weight="400"  >1</text>
<text x="1835" y="783.3" font-size="12" text-anchor="end" fill="#ccccdc" textLength="30.0" lengthAdjust="spacing" font-weight="400"  >0.126</text>
<path d="M1844,795.9L1848,795.9L1848,791.8" fill="none" stroke="#6e6f76" stroke-width="2" stroke-linejoin="miter"/>
</svg>
</body></html>
